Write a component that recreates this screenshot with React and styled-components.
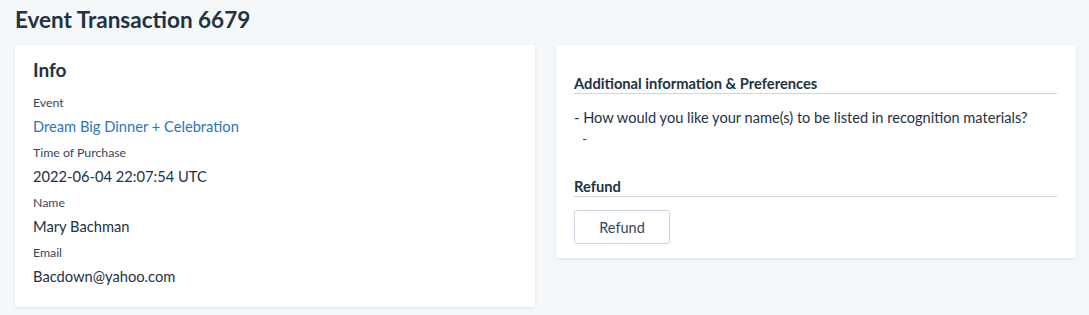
import styled, { createGlobalStyle } from "styled-components";

const GlobalStyle = createGlobalStyle`
  body {
    margin: 0;
    background: #f5f8fa;
    font-family: "Lato", "Open Sans", sans-serif;
    color: #33475b;
  }
`;

const Page = styled.div`
  padding: 8px 13px 8px 15px;
`;

const Title = styled.h1`
  margin: 0 0 13px;
  font-size: 22.5px;
  line-height: 24px;
  font-weight: 700;
  color: #213343;
`;

const Columns = styled.div`
  display: grid;
  grid-template-columns: 520px 520px;
  gap: 21px;
  align-items: start;
`;

const Card = styled.section`
  background: #fff;
  box-shadow: 0 1px 3px rgba(45, 62, 80, 0.12);
  padding: ${(p) => p.$pad || "14px 18px 22px"};
`;

const CardTitle = styled.h2`
  margin: 0 0 14px;
  font-size: 19px;
  line-height: 22px;
  font-weight: 700;
  color: #213343;
`;

const Field = styled.div`
  display: flex;
  flex-direction: column;
  gap: 6px;
  & + & {
    margin-top: 10px;
  }
`;

const Label = styled.span`
  font-size: 12.3px;
  line-height: 16px;
  color: #33475b;
`;

const Value = styled.span`
  font-size: 14.7px;
  line-height: 18px;
  color: ${(p) => (p.$link ? "#2d75bb" : "#213343")};
`;

const Section = styled.div`
  & + & {
    margin-top: 28px;
  }
`;

const SectionTitle = styled.h3`
  margin: 0 0 ${(p) => p.$gap || "14px"};
  padding-bottom: 1px;
  font-size: 14.7px;
  line-height: 18px;
  font-weight: 700;
  color: #213343;
  border-bottom: 1px solid #cbd6e2;
`;

const Question = styled.p`
  margin: 0;
  font-size: 14.6px;
  line-height: 20px;
  color: #213343;
`;

const Answer = styled.p`
  margin: 1px 0 0;
  padding-left: 8px;
  font-size: 14px;
  line-height: 20px;
  color: #33475b;
`;

const Button = styled.button`
  width: 96px;
  height: 34px;
  background: #fff;
  border: 1px solid #cbd6e2;
  border-radius: 3px;
  font-family: inherit;
  font-size: 14.5px;
  color: #33475b;
  cursor: pointer;
`;

const fields = [
  { label: "Event", value: "Dream Big Dinner + Celebration", link: true },
  { label: "Time of Purchase", value: "2022-06-04 22:07:54 UTC" },
  { label: "Name", value: "Mary Bachman" },
  { label: "Email", value: "Bacdown@yahoo.com" },
];

export default function App() {
  return (
    <Page>
      <GlobalStyle />
      <Title>Event Transaction 6679</Title>
      <Columns>
        <Card>
          <CardTitle>Info</CardTitle>
          {fields.map((f) => (
            <Field key={f.label}>
              <Label>{f.label}</Label>
              <Value $link={f.link}>{f.value}</Value>
            </Field>
          ))}
        </Card>
        <Card $pad="29px 19px 14px 18px">
          <Section>
            <SectionTitle>Additional information &amp; Preferences</SectionTitle>
            <Question>- How would you like your name(s) to be listed in recognition materials?</Question>
            <Answer>-</Answer>
          </Section>
          <Section>
            <SectionTitle $gap="13px">Refund</SectionTitle>
            <Button>Refund</Button>
          </Section>
        </Card>
      </Columns>
    </Page>
  );
}
